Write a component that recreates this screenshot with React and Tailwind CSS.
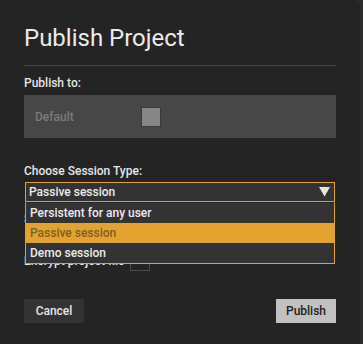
import React from 'react';

const options = ['Persistent for any user', 'Passive session', 'Demo session'];

const Checkbox = ({ className = '' }) => (
  <div className={`w-5 h-5 border border-[#3a3a3a] ${className}`} />
);

export default function App() {
  const selected = 'Passive session';

  return (
    <div className="w-[363px] h-[344px] bg-[#2b2b2b] overflow-hidden" style={{ fontFamily: 'Roboto, "Liberation Sans", sans-serif' }}>
      <div className="relative w-[360px] h-[344px] bg-[#242424] rounded-tr-[6px] px-6 pt-6">
        {/* Header */}
        <h1 className="text-[24px] leading-[28px] font-normal text-[#ebebeb]">Publish Project</h1>
        <div className="mt-[13px] h-px bg-[#474747]" />

        {/* Publish target */}
        <div className="mt-[9px] text-[12px] leading-4 font-medium text-[#e6e6e6]">Publish to:</div>
        <div className="mt-1 h-[43px] bg-[#474747] flex items-center pl-[11px]">
          <span className="w-[106px] text-[12px] font-medium text-[#7b7b7b]">Default</span>
          <Checkbox className="bg-[#868686]" />
        </div>

        {/* Session type */}
        <div className="mt-[25px] text-[12px] leading-4 font-medium text-[#e6e6e6]">Choose Session Type:</div>
        <div className="relative mt-[3px] ml-px w-[310px] h-5 border border-[#e0a12e] bg-[#333333] flex items-center justify-between pl-[3px] pr-[4px]">
          <span className="text-[12px] font-medium text-[#ececec]">{selected}</span>
          <svg width="11" height="10" viewBox="0 0 11 10">
            <polygon points="0,0 11,0 5.5,9.5" fill="#e6e6e6" />
          </svg>

          {/* Open list */}
          <div className="absolute left-[-1px] top-[19px] w-[310px] z-10 border-x border-b border-[#e0a12e] border-t border-t-[#262626]">
            {options.map((opt) => (
              <div
                key={opt}
                className={`h-5 flex items-center pl-1 text-[12px] font-medium ${
                  opt === selected ? 'bg-[#e2a32f] text-[#7f5f2a]' : 'bg-[#333333] text-[#ececec]'
                }`}
              >
                {opt}
              </div>
            ))}
          </div>
        </div>

        {/* Hidden behind the list */}
        <div className="mt-[9px] text-[12px] leading-4 font-medium text-[#e6e6e6]">Session timeout</div>
        <div className="mt-[24px] flex items-center">
          <span className="w-[106px] text-[12px] font-medium text-[#e6e6e6]">Encrypt project file</span>
          <Checkbox className="bg-[#242424] border-[#4a4a4a]" />
        </div>

        {/* Actions */}
        <div className="mt-[28px] flex justify-between">
          <button className="w-[60px] h-6 bg-[#333333] text-[12px] font-medium text-[#e6e6e6]">Cancel</button>
          <button className="w-[60px] h-6 bg-[#c1c1c1] text-[12px] font-medium text-[#1c1c1c]">Publish</button>
        </div>
      </div>
    </div>
  );
}
